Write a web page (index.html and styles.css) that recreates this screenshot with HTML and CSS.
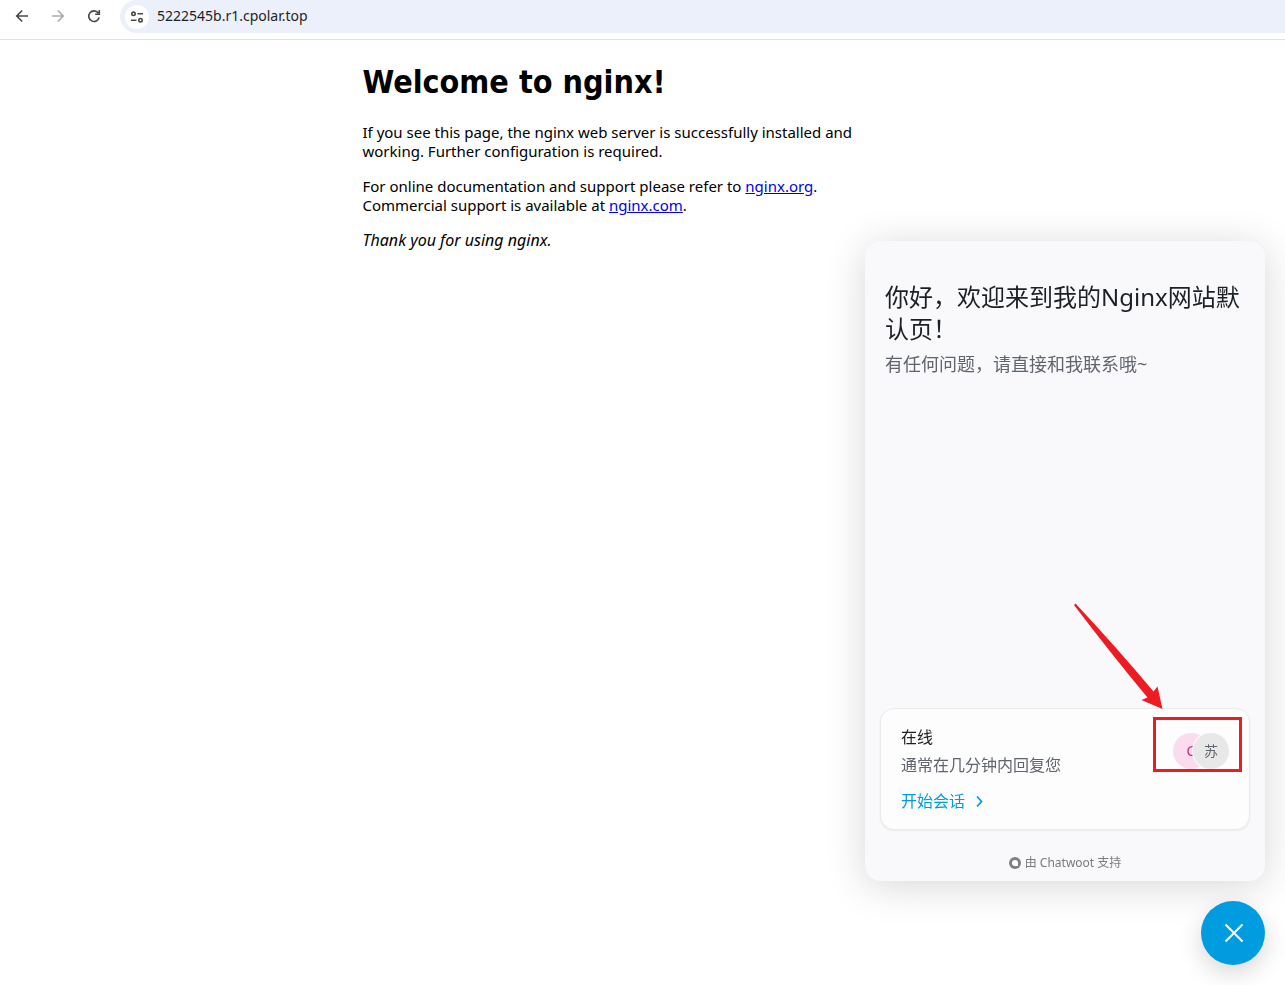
FILE: index.html
```html
<!DOCTYPE html>
<html lang="zh-CN">
<head>
<meta charset="utf-8">
<title>Welcome to nginx!</title>
<meta name="viewport" content="width=device-width, initial-scale=1">
<link rel="stylesheet" href="styles.css">
</head>
<body>
<header class="toolbar">
  <nav class="toolbar-nav" aria-label="Browser">
    <button class="tool" type="button" aria-label="Back">
      <svg viewBox="0 0 16 16" width="16" height="16"><path d="M14 8H3M8.200 2.500 2.700 8l5.500 5.500"/></svg>
    </button>
    <button class="tool tool-muted" type="button" aria-label="Forward">
      <svg viewBox="0 0 16 16" width="16" height="16"><path d="M2 8h11M7.800 2.500 13.300 8l-5.500 5.500"/></svg>
    </button>
    <button class="tool" type="button" aria-label="Reload">
      <svg viewBox="0 0 16 16" width="16" height="16"><path d="M13.200 9.400A5.300 5.300 0 1 1 12.300 5M13.300 2v4.200H9.200"/></svg>
    </button>
  </nav>
  <div class="address">
    <button class="site-info" type="button" aria-label="Site information">
      <svg viewBox="0 0 16 16" width="16" height="16"><circle cx="4.500" cy="4.800" r="1.700"/><path d="M8.500 4.800H14M2 11.200h5.500"/><circle cx="11.500" cy="11.200" r="1.700"/></svg>
    </button>
    <input class="url" type="text" aria-label="Address" value="5222545b.r1.cpolar.top">
  </div>
</header>

<main class="page">
  <h1 class="page-title">Welcome to nginx!</h1>
  <p class="page-text">If you see this page, the nginx web server is successfully installed and working. Further configuration is required.</p>
  <p class="page-text">For online documentation and support please refer to <a href="http://nginx.org/">nginx.org</a>.<br>Commercial support is available at <a href="http://nginx.com/">nginx.com</a>.</p>
  <p class="page-text page-thanks"><em>Thank you for using nginx.</em></p>
</main>

<div class="messenger">
  <section class="widget" aria-label="Chat">
    <div class="widget-intro">
      <h2 class="widget-title">你好，欢迎来到我的Nginx网站默认页！</h2>
      <p class="widget-tagline">有任何问题，请直接和我联系哦~</p>
    </div>
    <div class="widget-bottom">
      <div class="card">
        <div class="card-head">
          <div class="status">
            <p class="status-title">在线</p>
            <p class="status-text">通常在几分钟内回复您</p>
          </div>
          <div class="agents">
            <span class="avatar avatar-pink">C</span>
            <span class="avatar avatar-gray">苏</span>
            <span class="mark-box"></span>
            <svg class="mark-arrow" viewBox="0 0 90 108" width="90" height="108" aria-hidden="true"><path d="M0 2 1.500.5Q44 46 79.500 88.500L83.500 83.500 88.500 106 67.500 97l6-2.500Q38 52 0 2Z"/></svg>
          </div>
        </div>
        <button class="start" type="button">开始会话
          <svg viewBox="0 0 16 16" width="16" height="16"><path d="m6 3.500 4.500 5L6 13.500"/></svg>
        </button>
      </div>
      <a class="brand" href="https://www.chatwoot.com">
        <svg viewBox="0 0 12 12" width="12" height="12"><circle cx="6" cy="6" r="6"/><path d="M6 3a3 3 0 1 0 0 6h3V6a3 3 0 0 0-3-3Z"/></svg>
        <span>由 Chatwoot 支持</span>
      </a>
    </div>
  </section>
  <button class="bubble" type="button" aria-label="Close chat">
    <svg viewBox="0 0 24 24" width="24" height="24"><path d="m4.500 3.500 17 17M21.500 3.500l-17 17"/></svg>
  </button>
</div>
</body>
</html>
```

FILE: styles.css
```css
* {
  box-sizing: border-box;
}

body {
  margin: 0;
  min-height: 100vh;
  background: #fff;
  color: #000;
  font-family: "Noto Sans", "Noto Sans CJK SC", sans-serif;
}

button {
  padding: 0;
  border: 0;
  background: none;
  font: inherit;
  cursor: pointer;
}

svg {
  display: block;
}

.toolbar {
  display: flex;
  height: 40px;
  padding-left: 12px;
  border-bottom: 1px solid #dfe1e3;
}

.toolbar-nav {
  display: flex;
  gap: 16px;
  height: 32px;
  align-items: center;
}

.tool {
  display: grid;
  place-items: center;
  width: 20px;
  height: 20px;
}

.tool svg,
.site-info svg {
  fill: none;
  stroke: #474747;
  stroke-width: 1.6;
}

.tool-muted svg {
  stroke: #ababab;
}

.address {
  display: flex;
  flex: 1;
  align-items: center;
  gap: 8px;
  height: 33px;
  margin-left: 16px;
  padding-left: 5px;
  border-radius: 17px 0 0 17px;
  background: #ecf0fa;
}

.site-info {
  display: grid;
  place-items: center;
  width: 24px;
  height: 24px;
  border-radius: 50%;
  background: #fff;
}

.url {
  flex: 1;
  min-width: 0;
  padding: 0 0 2px;
  border: 0;
  outline: 0;
  background: none;
  color: #1f1f1f;
  font-family: "Noto Sans", sans-serif;
  font-size: 14px;
}

.page {
  width: 35em;
  max-width: 100%;
  margin: 0 auto;
  padding-top: 23px;
}

.page-title {
  margin: 0 0 21px;
  font-family: "DejaVu Sans Condensed", "DejaVu Sans", sans-serif;
  font-size: 32px;
  line-height: 39px;
}

.page-text {
  max-width: 540px;
  margin: 0 0 16px;
  font-family: "Noto Sans", sans-serif;
  font-size: 15px;
  line-height: 19px;
}

.page-thanks {
  font-size: 16px;
}

.page-text a {
  color: #00e;
}

.messenger {
  position: fixed;
  right: 20px;
  bottom: 20px;
  display: flex;
  flex-direction: column;
  align-items: flex-end;
  gap: 20px;
}

.widget {
  display: flex;
  flex-direction: column;
  justify-content: space-between;
  width: 400px;
  max-width: calc(100vw - 40px);
  min-height: 640px;
  border-radius: 16px;
  background: #f9f9fb;
  box-shadow: 0 5px 40px rgba(0, 0, 0, 0.16);
}

.widget-intro {
  padding: 40px 20px 0;
}

.widget-title {
  margin: 0;
  color: #1c2024;
  font-size: 24px;
  font-weight: 400;
  line-height: 32px;
}

.widget-tagline {
  margin: 6px 0 0;
  color: #60646c;
  font-size: 18px;
  line-height: 27px;
}

.widget-bottom {
  display: flex;
  flex-direction: column;
  gap: 25px;
  padding: 0 15px 10px;
}

.card {
  padding: 16px 20px;
  border: 1px solid #ebebed;
  border-radius: 14px;
  background: #fdfdfd;
  box-shadow: 0 1px 2px rgba(0, 0, 0, 0.06);
}

.card-head {
  display: flex;
  align-items: center;
  justify-content: space-between;
}

.status-title,
.status-text {
  margin: 0;
  font-size: 16px;
  line-height: 24px;
}

.status-title {
  color: #1c2024;
}

.status-text {
  margin-top: 4px;
  color: #60646c;
}

.agents {
  position: relative;
  display: flex;
}

.avatar {
  display: grid;
  place-items: center;
  width: 36px;
  height: 36px;
  border-radius: 50%;
  font-size: 14px;
  line-height: 20px;
}

.avatar-pink {
  background: #fadcee;
  color: #c2298a;
}

.avatar-gray {
  margin-left: -16px;
  background: #e8e8e8;
  box-shadow: 0 0 0 1px #fdfdfd;
  color: #60646c;
}

.mark-box {
  position: absolute;
  top: -16px;
  right: -13px;
  width: 89px;
  height: 55px;
  border: 3px solid #ed1c24;
}

.mark-arrow {
  position: absolute;
  right: 65px;
  bottom: 58px;
  fill: #ed1c24;
}

.start {
  display: flex;
  align-items: center;
  gap: 6px;
  margin-top: 12px;
  color: #009ce0;
  font-size: 16px;
  line-height: 24px;
}

.start svg {
  fill: none;
  stroke: currentColor;
  stroke-width: 1.8;
}

.brand {
  display: flex;
  align-items: center;
  justify-content: center;
  gap: 4px;
  color: #7a7a7a;
  font-size: 12px;
  line-height: 16px;
  text-decoration: none;
}

.brand circle {
  fill: #808080;
}

.brand path {
  fill: #fff;
}

.bubble {
  display: grid;
  place-items: center;
  width: 64px;
  height: 64px;
  border-radius: 50%;
  background: #009ce0;
  box-shadow: 0 8px 24px rgba(0, 0, 0, 0.16);
}

.bubble svg {
  fill: none;
  stroke: #fff;
  stroke-width: 2;
}
```
